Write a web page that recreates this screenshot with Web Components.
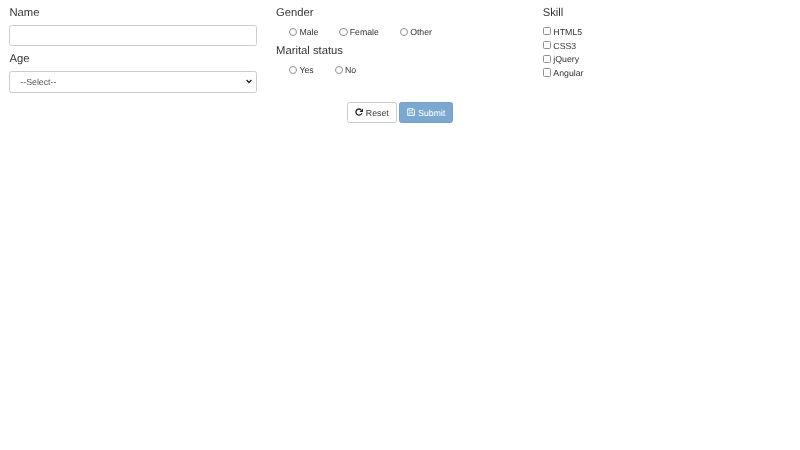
<!DOCTYPE html>
<html lang="en">
<head>
<meta charset="utf-8">
<title>Form</title>
<style>
  html, body { margin: 0; background: #fff; }
  body { font-family: "Liberation Sans", Arial, sans-serif; color: #333; font-size: 14px; }
</style>
</head>
<body>
<profile-form></profile-form>

<script>
// the reference is a 1280 wide page shrunk to 800, so sizes below are at 1280 and profile-form zooms down
class FieldLabel extends HTMLElement {
  constructor() {
    super();
    this.attachShadow({ mode: "open" });
    this.shadowRoot.innerHTML = `
      <style>
        :host { display: block; padding-top: 1.5px; font-size: 18px; line-height: 26px; color: #333; text-rendering: geometricPrecision; }
      </style>
      <slot></slot>
    `;
  }
}

class TextField extends HTMLElement {
  constructor() {
    super();
    this.attachShadow({ mode: "open" });
    this.shadowRoot.innerHTML = `
      <style>
        :host { display: block; margin-bottom: 6px; }
        input {
          display: block; box-sizing: border-box; width: 100%; height: 34px;
          margin: 6.5px 0 0; padding: 6px 12px;
          border: 1px solid #ccc; border-radius: 4px; background: #fff;
          font: 14px "Liberation Sans", Arial, sans-serif; color: #555;
        }
      </style>
      <field-label>${this.getAttribute("label")}</field-label>
      <input type="text">
    `;
  }
}

class SelectField extends HTMLElement {
  constructor() {
    super();
    this.attachShadow({ mode: "open" });
    this.shadowRoot.innerHTML = `
      <style>
        :host { display: block; }
        select {
          appearance: none; display: block; box-sizing: border-box; width: 100%; height: 34px;
          margin: 6.5px 0 0; padding: 6px 12px 6px 16px;
          border: 1px solid #ccc; border-radius: 4px;
          background: #fff url("data:image/svg+xml,%3Csvg xmlns='http://www.w3.org/2000/svg' width='10' height='8' viewBox='0 0 10 8'%3E%3Cpath d='M1 1.5l4 4 4-4' fill='none' stroke='%23222' stroke-width='2.2'/%3E%3C/svg%3E") no-repeat right 6px center;
          font: 14px "Liberation Sans", Arial, sans-serif; color: #555; text-rendering: geometricPrecision;
        }
      </style>
      <field-label>${this.getAttribute("label")}</field-label>
      <select><option>--Select--</option></select>
    `;
  }
}

class RadioGroup extends HTMLElement {
  constructor() {
    super();
    this.attachShadow({ mode: "open" });
    const options = this.getAttribute("options").split(",");
    const name = this.getAttribute("label");
    this.shadowRoot.innerHTML = `
      <style>
        :host { display: block; }
        .row { display: flex; gap: 33.5px; height: 31px; padding: 2.5px 0 0 21px; align-items: center; }
        label { display: flex; align-items: center; gap: 3.5px; font-size: 14px; color: #333; text-rendering: geometricPrecision; }
        input {
          appearance: none; box-sizing: border-box; width: 13px; height: 13px; margin: 0 0 2px;
          border: 1px solid #8f8f8f; border-radius: 50%; background: #fff;
        }
      </style>
      <field-label>${name}</field-label>
      <div class="row">
        ${options.map(o => `<label><input type="radio" name="${name}">${o}</label>`).join("")}
      </div>
    `;
  }
}

class CheckList extends HTMLElement {
  constructor() {
    super();
    this.attachShadow({ mode: "open" });
    const options = this.getAttribute("options").split(",");
    this.shadowRoot.innerHTML = `
      <style>
        :host { display: block; }
        .list { display: flex; flex-direction: column; padding-top: 6.5px; }
        label { display: flex; align-items: center; gap: 4px; height: 22px; font-size: 14px; color: #333; text-rendering: geometricPrecision; }
        input {
          appearance: none; box-sizing: border-box; width: 13px; height: 13px; margin: 0 0 2px;
          border: 1px solid #8f8f8f; border-radius: 2.5px; background: #fff;
        }
      </style>
      <field-label>${this.getAttribute("label")}</field-label>
      <div class="list">
        ${options.map(o => `<label><input type="checkbox">${o}</label>`).join("")}
      </div>
    `;
  }
}

class ActionButton extends HTMLElement {
  constructor() {
    super();
    this.attachShadow({ mode: "open" });
    this.shadowRoot.innerHTML = `
      <style>
        :host { display: inline-block; }
        button {
          display: flex; align-items: center; gap: 4.5px; box-sizing: border-box;
          height: 34px; padding: 6px 11.5px; border: 1px solid #ccc; border-radius: 4px;
          background: #fff; color: #333; font: 14px "Liberation Sans", Arial, sans-serif; text-rendering: geometricPrecision;
        }
        :host([primary]) button { background: #337ab7; border-color: #2e6da4; color: #fff; opacity: .65; }
        ::slotted(svg) { width: 13px; height: 13px; display: block; }
      </style>
      <button type="button"><slot name="icon"></slot><slot></slot></button>
    `;
  }
}

class ProfileForm extends HTMLElement {
  constructor() {
    super();
    this.attachShadow({ mode: "open" });
    this.shadowRoot.innerHTML = `
      <style>
        :host { display: block; zoom: .625; padding-top: 6px; filter: blur(.65px); }
        .cols { display: grid; grid-template-columns: repeat(3, 1fr); }
        .col { padding: 0 15px; min-width: 0; }
        .actions { display: flex; justify-content: center; gap: 3px; margin-top: 15px; }
      </style>
      <div class="cols">
        <div class="col">
          <text-field label="Name"></text-field>
          <select-field label="Age"></select-field>
        </div>
        <div class="col">
          <radio-group label="Gender" options="Male,Female,Other"></radio-group>
          <radio-group label="Marital status" options="Yes,No"></radio-group>
        </div>
        <div class="col">
          <check-list label="Skill" options="HTML5,CSS3,jQuery,Angular"></check-list>
        </div>
      </div>
      <div class="actions">
        <action-button>
          <svg slot="icon" viewBox="0 0 13 13"><path d="M11 8.2A4.9 4.9 0 1 1 9.9 3.1" fill="none" stroke="#222" stroke-width="2.1"/><path d="M12.8 0.6v5.6H7.2z" fill="#222"/></svg>
          Reset
        </action-button>
        <action-button primary>
          <svg slot="icon" viewBox="0 0 13 13" fill="none" stroke="#fff"><path stroke-width="1.3" d="M1 1h8.8L12 3.2V12H1z"/><path stroke-width="1.2" d="M3.4 1.4v3.2h5.4V1.4M3.4 12V7.6h6.2V12"/></svg>
          Submit
        </action-button>
      </div>
    `;
  }
}

customElements.define("field-label", FieldLabel);
customElements.define("text-field", TextField);
customElements.define("select-field", SelectField);
customElements.define("radio-group", RadioGroup);
customElements.define("check-list", CheckList);
customElements.define("action-button", ActionButton);
customElements.define("profile-form", ProfileForm);
</script>
</body>
</html>
